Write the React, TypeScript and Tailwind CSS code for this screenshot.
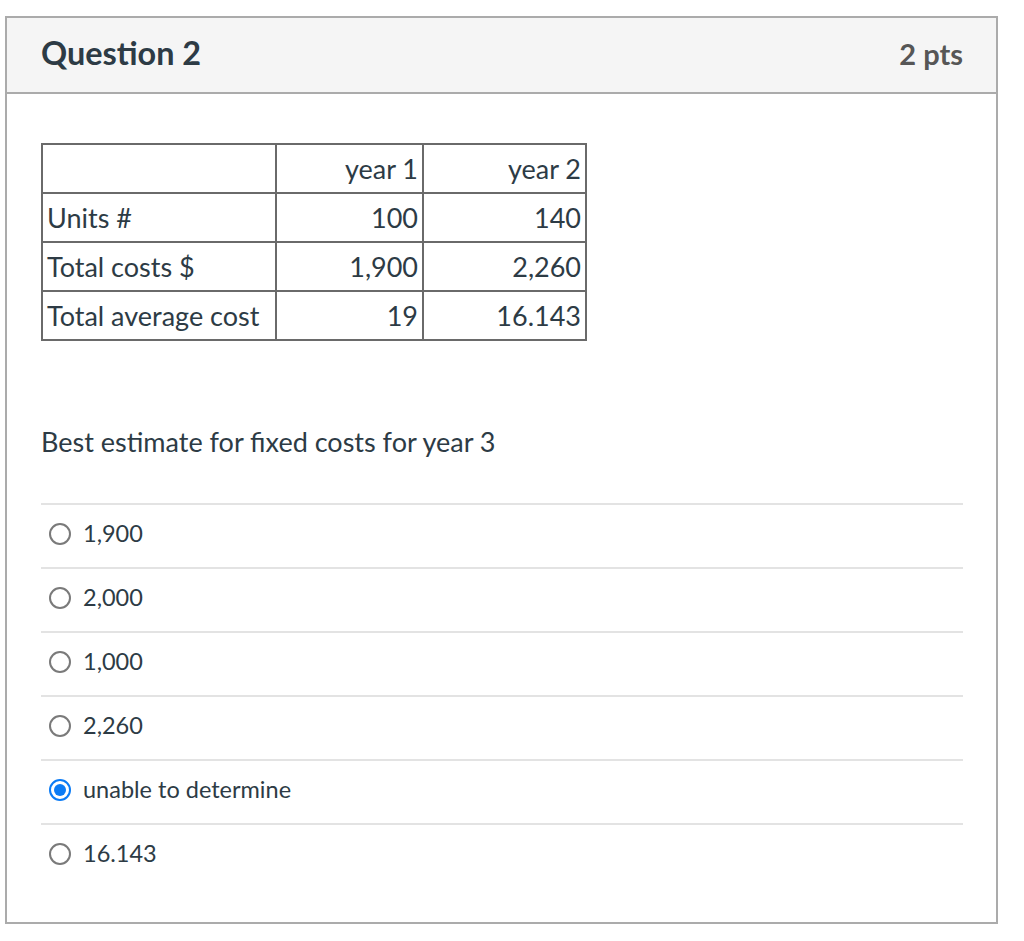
const rows = [
  { label: "", y1: "year 1", y2: "year 2" },
  { label: "Units #", y1: "100", y2: "140" },
  { label: "Total costs $", y1: "1,900", y2: "2,260" },
  { label: "Total average cost", y1: "19", y2: "16.143" },
];

const answers = ["1,900", "2,000", "1,000", "2,260", "unable to determine", "16.143"];
const selected = "unable to determine";

const Radio = ({ checked }: { checked: boolean }) =>
  checked ? (
    <span className="flex h-[22px] w-[22px] items-center justify-center rounded-full border-2 border-[#0b7bf5] bg-white">
      <span className="h-[12px] w-[12px] rounded-full bg-[#0b7bf5]" />
    </span>
  ) : (
    <span className="h-[22px] w-[22px] rounded-full border-2 border-[#7a7a7a] bg-white" />
  );

export default function App() {
  return (
    <div
      className="min-h-[941px] bg-white pt-[16px] pl-[5px] text-[#2d3b45]"
      style={{ fontFamily: "Lato, 'Liberation Sans', sans-serif" }}
    >
      <div className="w-[993px] border-2 border-[#ababab]">
        <div className="flex h-[76px] items-center justify-between border-b-2 border-[#ababab] bg-[#f5f5f5] pb-[3px] pl-[34px] pr-[33px]">
          <h2 className="text-[32.4px] font-bold text-[#2d3b45]">Question 2</h2>
          <span className="text-[29px] font-bold text-[#565656]">2 pts</span>
        </div>

        <div className="px-[34px] pt-[49px] pb-[35px]">
          <table className="border-collapse text-[27px]">
            <tbody>
              {rows.map((r, i) => (
                <tr key={i} className="h-[49px]">
                  <td className="w-[234px] border-2 border-[#6a6a6a] px-[4px] py-0 text-left leading-[36px]">{r.label}</td>
                  <td className="w-[147px] border-2 border-[#6a6a6a] px-[4px] py-0 text-right leading-[36px]">{r.y1}</td>
                  <td className="w-[163px] border-2 border-[#6a6a6a] px-[4px] py-0 text-right leading-[36px]">{r.y2}</td>
                </tr>
              ))}
            </tbody>
          </table>

          <p className="mt-[83px] text-[27px] leading-[36px]">Best estimate for fixed costs for year 3</p>

          <div className="mt-[43px] w-[922px]">
            {answers.map((a) => (
              <div key={a} className="flex h-[64px] items-center gap-[12px] border-t-2 border-[#e3e3e3] pb-[4px] pl-[8px]">
                <Radio checked={a === selected} />
                <span className="text-[23.5px]">{a}</span>
              </div>
            ))}
          </div>
        </div>
      </div>
    </div>
  );
}
